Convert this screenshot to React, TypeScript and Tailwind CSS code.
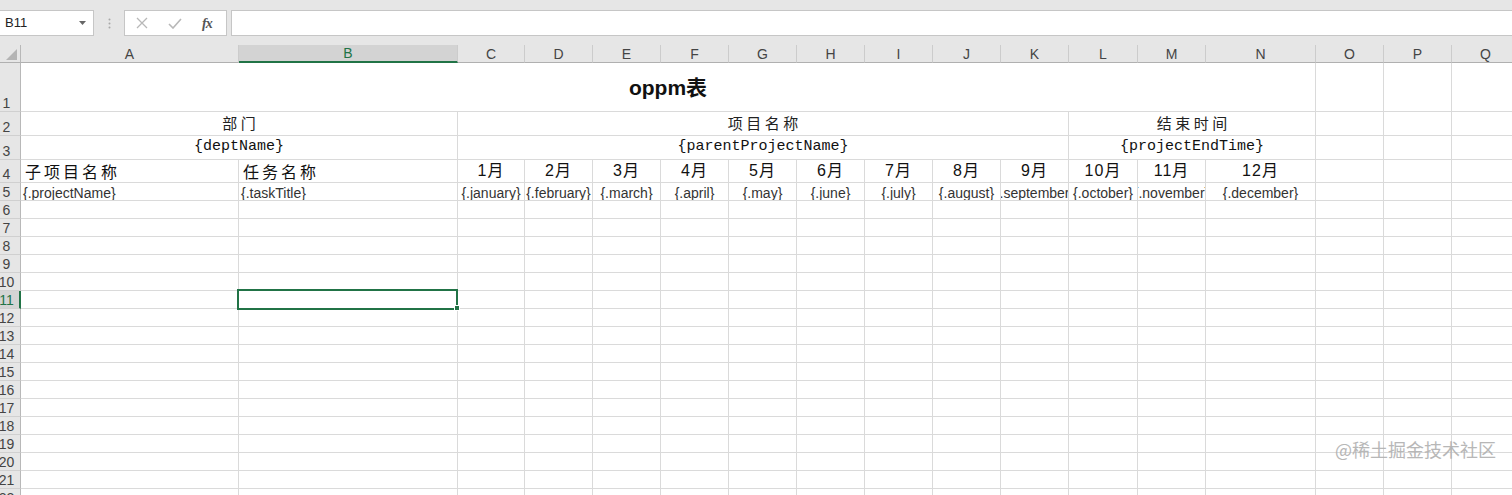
import React from 'react';

const COLS = ['A', 'B', 'C', 'D', 'E', 'F', 'G', 'H', 'I', 'J', 'K', 'L', 'M', 'N', 'O', 'P', 'Q'];
const MONTHS = ['1月', '2月', '3月', '4月', '5月', '6月', '7月', '8月', '9月', '10月', '11月', '12月'];
const FIELDS = [
  '{.january}', '{.february}', '{.march}', '{.april}', '{.may}', '{.june}',
  '{.july}', '{.august}', '{.september}', '{.october}', '{.november}', '{.december}',
];

const cell = 'min-w-0 overflow-hidden whitespace-nowrap flex bg-white border-r border-b border-[#dadada]';
const cjk = "font-['Noto_Sans_CJK_SC',sans-serif]";
const mono = "font-['Liberation_Mono','Noto_Sans_CJK_SC',monospace]";

function RowHead({ n, active }: { n: number; active?: boolean }) {
  return (
    <div
      className={`flex items-end border-b border-[#d0d0d0] ${
        active ? 'bg-[#d4d4d4] border-r-2 border-r-[#217346] text-[#217346]' : 'bg-[#e6e6e6] border-r border-r-[#b8b8b8] text-[#444]'
      }`}
    >
      <span className="w-[13px] flex justify-center text-[14px] leading-[16px]">{n}</span>
    </div>
  );
}

function Empty() {
  return <div className={cell} />;
}

function Toolbar() {
  return (
    <div className="h-[45px] bg-[#e6e6e6] flex items-start pt-[10px] gap-0">
      <div className="w-[94px] h-[26px] bg-white border border-[#c6c6c6] border-l-0 flex items-center justify-between pl-[5px] pr-[7px]">
        <span className="text-[13px] text-[#222]">B11</span>
        <svg width="7" height="4" viewBox="0 0 7 4">
          <path d="M0 0h7L3.5 4z" fill="#666" />
        </svg>
      </div>
      <div className="w-[30px] h-[26px] flex items-center justify-center">
        <svg width="3" height="11" viewBox="0 0 3 11">
          <circle cx="1.5" cy="1.5" r="1" fill="#a8a8a8" />
          <circle cx="1.5" cy="5.5" r="1" fill="#a8a8a8" />
          <circle cx="1.5" cy="9.5" r="1" fill="#a8a8a8" />
        </svg>
      </div>
      <div className="w-[103px] h-[26px] bg-white border border-[#c6c6c6] flex items-center pl-[11px] gap-[20px]">
        <svg width="12" height="12" viewBox="0 0 12 12">
          <path d="M1 1l10 10M11 1L1 11" stroke="#b8b8b8" strokeWidth="1.3" fill="none" />
        </svg>
        <svg width="14" height="11" viewBox="0 0 14 11">
          <path d="M1 6l4 4L13 1" stroke="#b8b8b8" strokeWidth="1.6" fill="none" />
        </svg>
        <span className="text-[14px] italic font-bold text-[#555] font-['Liberation_Serif',serif] tracking-[-1px]">fx</span>
      </div>
      <div className="ml-[4px] flex-1 h-[26px] bg-white border border-[#c6c6c6] border-r-0" />
    </div>
  );
}

function Sheet() {
  const rows: React.ReactNode[] = [];

  // column header row
  rows.push(
    <div key="corner" className="bg-[#e6e6e6] border-r border-r-[#b8b8b8] border-b border-b-[#b0b0b0] flex items-end justify-end pr-[3px] pb-[2px]">
      <svg width="11" height="11" viewBox="0 0 11 11">
        <path d="M11 0V11H0z" fill="#b4b4b4" />
      </svg>
    </div>
  );
  COLS.forEach((c) => {
    const sel = c === 'B';
    rows.push(
      <div
        key={'h' + c}
        className={`flex items-center justify-center text-[14px] leading-[16px] border-r border-r-[#cccccc] ${
          sel ? 'bg-[#d3d3d3] text-[#217346] border-b-2 border-b-[#217346]' : 'bg-[#e6e6e6] text-[#444] border-b border-b-[#b0b0b0]'
        }`}
      >
        {c}
      </div>
    );
  });

  // row 1: title
  rows.push(<RowHead key="r1" n={1} />);
  rows.push(
    <div key="title" className={`${cell} col-span-14 items-center justify-center pt-[2px]`}>
      <span className={`text-[21px] font-bold text-[#111] font-['Liberation_Sans','Noto_Sans_CJK_SC',sans-serif]`}>oppm表</span>
    </div>
  );
  rows.push(<Empty key="1o" />, <Empty key="1p" />, <Empty key="1q" />);

  // row 2: labels
  rows.push(<RowHead key="r2" n={2} />);
  rows.push(
    <div key="2ab" className={`${cell} col-span-2 items-center justify-center`}>
      <span className={`${cjk} text-[15px] tracking-[3.5px] pl-[3.5px] text-[#222]`}>部门</span>
    </div>,
    <div key="2ck" className={`${cell} col-span-9 items-center justify-center`}>
      <span className={`${cjk} text-[15px] tracking-[3.5px] pl-[3.5px] text-[#222]`}>项目名称</span>
    </div>,
    <div key="2ln" className={`${cell} col-span-3 items-center justify-center`}>
      <span className={`${cjk} text-[15px] tracking-[3.5px] pl-[3.5px] text-[#222]`}>结束时间</span>
    </div>
  );
  rows.push(<Empty key="2o" />, <Empty key="2p" />, <Empty key="2q" />);

  // row 3: placeholders
  rows.push(<RowHead key="r3" n={3} />);
  rows.push(
    <div key="3ab" className={`${cell} col-span-2 items-center justify-center`}>
      <span className={`${mono} text-[15px] text-[#111]`}>{'{deptName}'}</span>
    </div>,
    <div key="3ck" className={`${cell} col-span-9 items-center justify-center`}>
      <span className={`${mono} text-[15px] text-[#111]`}>{'{parentProjectName}'}</span>
    </div>,
    <div key="3ln" className={`${cell} col-span-3 items-center justify-center`}>
      <span className={`${mono} text-[15px] text-[#111]`}>{'{projectEndTime}'}</span>
    </div>
  );
  rows.push(<Empty key="3o" />, <Empty key="3p" />, <Empty key="3q" />);

  // row 4: column titles
  rows.push(<RowHead key="r4" n={4} />);
  rows.push(
    <div key="4a" className={`${cell} items-center pl-[4px]`}>
      <span className={`${cjk} text-[16px] tracking-[3px] text-[#111]`}>子项目名称</span>
    </div>,
    <div key="4b" className={`${cell} items-center pl-[4px]`}>
      <span className={`${cjk} text-[16px] tracking-[3px] text-[#111]`}>任务名称</span>
    </div>
  );
  MONTHS.forEach((m) => {
    rows.push(
      <div key={'4' + m} className={`${cell} items-center justify-center`}>
        <span className="text-[16px] tracking-[1px] text-[#111] font-['Liberation_Sans','Noto_Sans_CJK_SC',sans-serif]">{m}</span>
      </div>
    );
  });
  rows.push(<Empty key="4o" />, <Empty key="4p" />, <Empty key="4q" />);

  // row 5: fields
  rows.push(<RowHead key="r5" n={5} />);
  rows.push(
    <div key="5a" className={`${cell} items-end pl-[2px]`}>
      <span className="text-[14px] leading-[13px] text-[#333]">{'{.projectName}'}</span>
    </div>,
    <div key="5b" className={`${cell} items-end pl-[2px]`}>
      <span className="text-[14px] leading-[13px] text-[#333]">{'{.taskTitle}'}</span>
    </div>
  );
  FIELDS.forEach((f) => {
    rows.push(
      <div key={'5' + f} className={`${cell} items-end justify-center`}>
        <span className="text-[14px] leading-[13px] text-[#333]">{f}</span>
      </div>
    );
  });
  rows.push(<Empty key="5o" />, <Empty key="5p" />, <Empty key="5q" />);

  // rows 6..22: blank
  for (let r = 6; r <= 22; r++) {
    const active = r === 11;
    rows.push(<RowHead key={'r' + r} n={r} active={active} />);
    COLS.forEach((c) => {
      if (active && c === 'B') {
        rows.push(
          <div key={r + c} className="relative bg-white border-r border-b border-[#dadada]">
            <div className="absolute -left-[2px] -top-[2px] w-[221px] h-[21px] border-2 border-[#217346] z-10" />
            <div className="absolute right-[-3px] bottom-[-3px] w-[6px] h-[6px] bg-[#217346] border border-white z-20" />
          </div>
        );
      } else {
        rows.push(<Empty key={r + c} />);
      }
    });
  }

  return (
    <div className="grid w-max grid-cols-[21px_218px_219px_67px_68px_68px_68px_68px_68px_68px_68px_68px_69px_68px_110px_68px_68px_68px] grid-rows-[18px_49px_24px_24px_23px_repeat(18,18px)]">
      {rows}
    </div>
  );
}

export default function App() {
  return (
    <div className="relative w-[1512px] h-[495px] overflow-hidden bg-white font-['Liberation_Sans','Noto_Sans_CJK_SC',sans-serif]">
      <Toolbar />
      <Sheet />
      <div className="absolute left-[1335px] top-[438px] text-[18px] leading-[22px] text-[#b0b0b0] opacity-90 font-['Noto_Sans_CJK_SC',sans-serif]">
        @稀土掘金技术社区
      </div>
    </div>
  );
}
